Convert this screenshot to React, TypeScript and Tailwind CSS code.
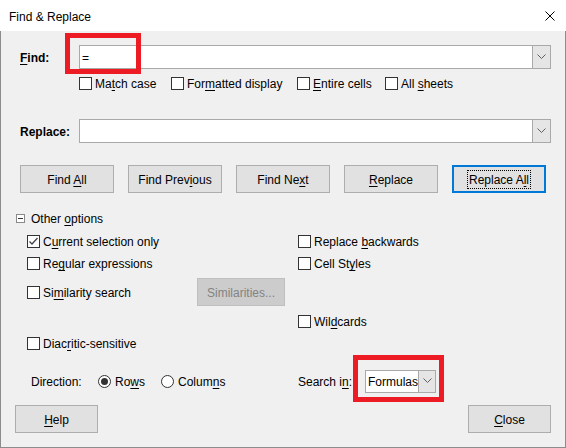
import type { ReactNode } from "react";

// texto con la letra de acceso subrayada
function Mn({ t, i }: { t: string; i: number }) {
  return (
    <>
      {t.slice(0, i)}
      <span className="underline decoration-1 underline-offset-[2px]">{t[i]}</span>
      {t.slice(i + 1)}
    </>
  );
}

function Chevron() {
  return (
    <svg width="9" height="6" viewBox="0 0 9 6">
      <path d="M0.5 0.5 L4.5 4.5 L8.5 0.5" stroke="#606060" strokeWidth="1" fill="none" />
    </svg>
  );
}

function Check({ label, checked }: { label: ReactNode; checked?: boolean }) {
  return (
    <div className="flex items-center gap-[3px]">
      <span className="flex h-[13px] w-[13px] shrink-0 items-center justify-center border border-[#333333] bg-white">
        {checked && (
          <svg width="11" height="11" viewBox="0 0 11 11">
            <path d="M1.5 5.5 L4 8 L9.5 2" stroke="#444444" strokeWidth="1.3" fill="none" />
          </svg>
        )}
      </span>
      <span className="whitespace-nowrap pt-[2px]">{label}</span>
    </div>
  );
}

function Radio({ label, on }: { label: ReactNode; on?: boolean }) {
  return (
    <div className="flex items-center gap-[4px]">
      <span className="flex h-[13px] w-[13px] shrink-0 items-center justify-center rounded-full border border-[#333333] bg-white">
        {on && <span className="h-[7px] w-[7px] rounded-full bg-[#333333]" />}
      </span>
      <span className="whitespace-nowrap pt-[2px]">{label}</span>
    </div>
  );
}

function Btn({ children, w = "w-[94px]" }: { children: ReactNode; w?: string }) {
  return (
    <button className={`${w} flex h-[28px] items-center justify-center border border-[#adadad] bg-[#e1e1e1] text-[12px]`}>
      <span className="whitespace-pre pt-[2px]">{children}</span>
    </button>
  );
}

function Combo({ value, w, h }: { value?: string; w: string; h: string }) {
  return (
    <div className={`${w} ${h} flex border border-[#a9a9a9] bg-white`}>
      <div className="flex flex-1 items-center pl-[2px] pt-[2px]">{value}</div>
      <div className="flex w-[18px] items-center justify-center border-l border-[#a9a9a9] bg-[#e5e5e5]">
        <Chevron />
      </div>
    </div>
  );
}

export default function App() {
  return (
    <div className="relative flex h-[448px] w-[566px] flex-col bg-white font-['Liberation_Sans',Arial,sans-serif] text-[12px] leading-[16px] text-black">
      {/* Barra de título */}
      <div className="flex h-[31px] shrink-0 items-center justify-between pl-[9px] pr-[11px]">
        <span className="pt-[2px]">Find &amp; Replace</span>
        <svg width="10" height="10" viewBox="0 0 10 10">
          <path d="M0.5 0.5 L9.5 9.5 M9.5 0.5 L0.5 9.5" stroke="#000" strokeWidth="1" />
        </svg>
      </div>

      <div className="flex flex-1 flex-col border-x border-b border-[#8c8c8c] bg-[#f0f0f0]">
        {/* Buscar */}
        <div className="mt-[14px] flex h-[24px] items-center">
          <span className="w-[78px] pl-[19px] pt-[2px] font-bold">
            <Mn t="Find:" i={0} />
          </span>
          <Combo value="=" w="w-[472px]" h="h-[24px]" />
        </div>

        <div className="mt-[7px] flex h-[14px] items-center pl-[78px]">
          <div className="w-[92px]">
            <Check label={<Mn t="Match case" i={2} />} />
          </div>
          <div className="w-[126px]">
            <Check label={<Mn t="Formatted display" i={3} />} />
          </div>
          <div className="w-[88px]">
            <Check label={<Mn t="Entire cells" i={0} />} />
          </div>
          <Check label={<Mn t="All sheets" i={4} />} />
        </div>

        {/* Reemplazar */}
        <div className="mt-[29px] flex h-[24px] items-center">
          <span className="w-[78px] pl-[19px] pt-[2px] font-bold">Replace:</span>
          <Combo w="w-[472px]" h="h-[24px]" />
        </div>

        {/* Botones */}
        <div className="mt-[22px] flex h-[28px] gap-[14px] pl-[19px]">
          <Btn>
            {"Find "}
            <Mn t="All" i={0} />
          </Btn>
          <Btn>
            {"Find "}
            <Mn t="Previous" i={4} />
          </Btn>
          <Btn>
            {"Find "}
            <Mn t="Next" i={2} />
          </Btn>
          <Btn>
            <Mn t="Replace" i={0} />
          </Btn>
          <button className="flex h-[28px] w-[94px] items-center justify-center border-2 border-[#0078d7] bg-[#e1e1e1]">
            <span className="border border-dotted border-black px-[1px] pt-[1px]">
              Replace A<span className="underline decoration-1 underline-offset-[2px]">l</span>l
            </span>
          </button>
        </div>

        {/* Otras opciones */}
        <div className="mt-[17px] flex h-[16px] items-center gap-[6px] pl-[15px]">
          <span className="flex h-[9px] w-[9px] items-center justify-center border border-[#8a8a8a] bg-white">
            <span className="h-px w-[5px] bg-[#333333]" />
          </span>
          <span className="pt-[2px]">
            Other <Mn t="options" i={0} />
          </span>
        </div>

        <div className="mt-[6px] flex h-[18px] items-center">
          <div className="w-[297px] pl-[26px]">
            <Check checked label={<Mn t="Current selection only" i={1} />} />
          </div>
          <Check label={<Mn t="Replace backwards" i={8} />} />
        </div>

        <div className="mt-[4px] flex h-[18px] items-center">
          <div className="w-[297px] pl-[26px]">
            <Check label={<Mn t="Regular expressions" i={2} />} />
          </div>
          <Check label={<Mn t="Cell Styles" i={7} />} />
        </div>

        <div className="mt-[6px] flex h-[28px] items-center">
          <div className="flex w-[297px] items-center pl-[26px]">
            <div className="w-[170px]">
              <Check label={<Mn t="Similarity search" i={2} />} />
            </div>
            <div className="flex h-[28px] w-[88px] items-center justify-center border border-[#bfbfbf] bg-[#cccccc] pt-[2px] text-[#838383]">
              Similarities...
            </div>
          </div>
        </div>

        <div className="mt-[6px] flex h-[18px] items-center">
          <div className="w-[297px]" />
          <Check label={<Mn t="Wildcards" i={3} />} />
        </div>

        <div className="mt-[4px] flex h-[18px] items-center">
          <div className="w-[297px] pl-[26px]">
            <Check label={<Mn t="Diacritic-sensitive" i={4} />} />
          </div>
        </div>

        {/* Dirección y buscar en */}
        <div className="mt-[17px] flex h-[24px] items-center">
          <div className="flex w-[297px] items-center pl-[30px]">
            <span className="w-[67px] pt-[2px]">Direction:</span>
            <div className="w-[63px]">
              <Radio on label={<Mn t="Rows" i={2} />} />
            </div>
            <Radio label={<Mn t="Columns" i={5} />} />
          </div>
          <span className="w-[67px] pt-[2px]">
            Search i<span className="underline decoration-1 underline-offset-[2px]">n</span>:
          </span>
          <Combo value="Formulas" w="w-[71px]" h="h-[23px]" />
        </div>

        <div className="mt-[12px] flex h-[28px] justify-between px-[14px]">
          <Btn w="w-[83px]">
            <Mn t="Help" i={0} />
          </Btn>
          <Btn w="w-[83px]">
            <Mn t="Close" i={0} />
          </Btn>
        </div>
      </div>

      {/* Recuadros rojos de anotación */}
      <div className="absolute left-[65px] top-[33px] h-[41px] w-[76px] border-[5px] border-[#ed1c24]" />
      <div className="absolute left-[353px] top-[355px] h-[47px] w-[91px] border-[5px] border-[#ed1c24]" />
    </div>
  );
}
